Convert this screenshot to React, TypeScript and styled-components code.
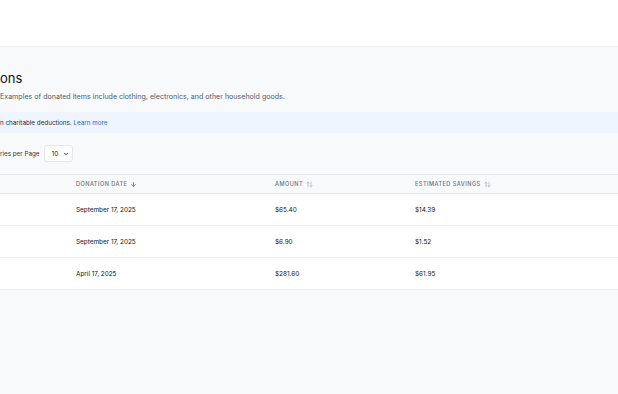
import React from "react";
import styled, { createGlobalStyle } from "styled-components";
import { ArrowDown, ArrowUpDown, ChevronDown } from "lucide-react";

const GlobalStyle = createGlobalStyle`
  * { box-sizing: border-box; }
  html, body { margin: 0; padding: 0; }
  body {
    font-family: Inter, "Noto Sans", sans-serif;
    background: #f8f9fb;
    color: #111827;
  }
`;

// the page is wider than the window: its left part stays out of view
const HIDDEN = 200;
const PAD = 24;

const donations = [
  { item: "Winter coats (3)", date: "September 17, 2025", amount: "$65.40", savings: "$14.39" },
  { item: "Kitchen utensils", date: "September 17, 2025", amount: "$6.90", savings: "$1.52" },
  { item: "Laptop and monitor", date: "April 17, 2025", amount: "$281.60", savings: "$61.95" },
];

export default function App() {
  return (
    <>
      <GlobalStyle />
      <Shell>
        <TopBar />
        <Main>
          <Title>
            <Lead $w={HIDDEN - PAD}>Donati</Lead>ons
          </Title>
          <Description>
            <Lead $w={HIDDEN - PAD}>Keep track of items. </Lead>Examples of donated items include
            clothing, electronics, and other household goods.
          </Description>
          <Banner>
            <Lead $w={HIDDEN - PAD}>Keep receipts for i</Lead>n charitable deductions.{" "}
            <LearnMore href="#">Learn more</LearnMore>
          </Banner>
          <Toolbar>
            <Label>
              <Lead $w={HIDDEN - PAD}>Ent</Lead>ries per Page
            </Label>
            <SelectBox>
              <PageSize defaultValue="10">
                <option value="10">10</option>
                <option value="25">25</option>
                <option value="50">50</option>
              </PageSize>
              <ChevronDown size={6} strokeWidth={3.5} />
            </SelectBox>
          </Toolbar>
          <Table>
            <colgroup>
              <col style={{ width: HIDDEN + 76 - PAD }} />
              <col style={{ width: 199 }} />
              <col style={{ width: 140 }} />
              <col />
            </colgroup>
            <thead>
              <tr>
                <Th>Item</Th>
                <Th>
                  <HeadLabel $active>
                    Donation Date <ArrowDown size={7} strokeWidth={2.5} />
                  </HeadLabel>
                </Th>
                <Th>
                  <HeadLabel>
                    Amount <ArrowUpDown size={7} strokeWidth={2} />
                  </HeadLabel>
                </Th>
                <Th>
                  <HeadLabel>
                    Estimated Savings <ArrowUpDown size={7} strokeWidth={2} />
                  </HeadLabel>
                </Th>
              </tr>
            </thead>
            <tbody>
              {donations.map((d, i) => (
                <Row key={i}>
                  <Td>{d.item}</Td>
                  <Td>{d.date}</Td>
                  <Td>{d.amount}</Td>
                  <Td>{d.savings}</Td>
                </Row>
              ))}
            </tbody>
          </Table>
        </Main>
      </Shell>
    </>
  );
}

const Shell = styled.div`
  width: 100%;
  min-height: 394px;
  overflow: hidden;
  background: #f8f9fb;
`;

const TopBar = styled.header`
  height: 47px;
  background: #fff;
  border-bottom: 1px solid #eef0f4;
`;

const Main = styled.main`
  margin-left: -${HIDDEN}px;
  width: calc(100% + ${HIDDEN + 60}px);
  padding-top: 21px;
`;

const Lead = styled.span<{ $w: number }>`
  display: inline-block;
  width: ${(p) => p.$w}px;
  overflow: hidden;
  white-space: pre;
  text-align: right;
  vertical-align: top;
`;

const Title = styled.h1`
  margin: 0 0 3px;
  padding-left: ${PAD}px;
  font-size: 13px;
  line-height: 20px;
  font-weight: 400;
  color: #0f1420;
  white-space: nowrap;
`;

const Description = styled.p`
  margin: 0;
  padding-left: ${PAD}px;
  font-size: 7.1px;
  line-height: 12px;
  color: #525c6b;
  white-space: nowrap;
`;

const Banner = styled.div`
  margin-top: 9px;
  height: 21px;
  padding-left: ${PAD}px;
  display: flex;
  align-items: center;
  background: #eef5fe;
  font-size: 6.3px;
  color: #1f2a44;
  white-space: pre;
`;

const LearnMore = styled.a`
  color: #2563eb;
  text-decoration: none;
`;

const Toolbar = styled.div`
  margin-top: 12px;
  padding-left: ${PAD}px;
  display: flex;
  align-items: center;
  gap: 4px;
`;

const Label = styled.span`
  font-size: 6.3px;
  color: #2f3744;
  white-space: nowrap;
`;

const SelectBox = styled.label`
  display: inline-flex;
  align-items: center;
  justify-content: space-between;
  width: 29px;
  height: 17px;
  padding: 0 3px 0 7px;
  background: #fff;
  border: 1px solid #e5e7eb;
  border-radius: 3px;
  color: #111827;

  svg {
    flex: none;
  }
`;

const PageSize = styled.select`
  appearance: none;
  border: none;
  background: transparent;
  padding: 0;
  margin: 0;
  width: 10px;
  font-family: inherit;
  font-size: 6.5px;
  color: #111827;
  outline: none;
`;

const Table = styled.table`
  margin-top: 12px;
  width: 100%;
  table-layout: fixed;
  border-collapse: collapse;
`;

const Th = styled.th`
  height: 19px;
  padding: 0 ${PAD}px;
  text-align: left;
  border-top: 1px solid #e6e8ec;
  border-bottom: 1px solid #e6e8ec;
  background: #f8f9fb;
  font-size: 5.6px;
  font-weight: 500;
  letter-spacing: 0.45px;
  text-transform: uppercase;
  color: #6b7280;
  white-space: nowrap;
`;

const HeadLabel = styled.span<{ $active?: boolean }>`
  display: inline-flex;
  align-items: center;
  gap: 3px;

  svg {
    color: ${(p) => (p.$active ? "#2563eb" : "#9ca3af")};
  }
`;

const Row = styled.tr`
  background: #fff;
`;

const Td = styled.td`
  height: 32px;
  padding: 0 ${PAD}px;
  border-bottom: 1px solid #eceef2;
  font-size: 6.4px;
  color: #0f1420;
  white-space: nowrap;
`;
